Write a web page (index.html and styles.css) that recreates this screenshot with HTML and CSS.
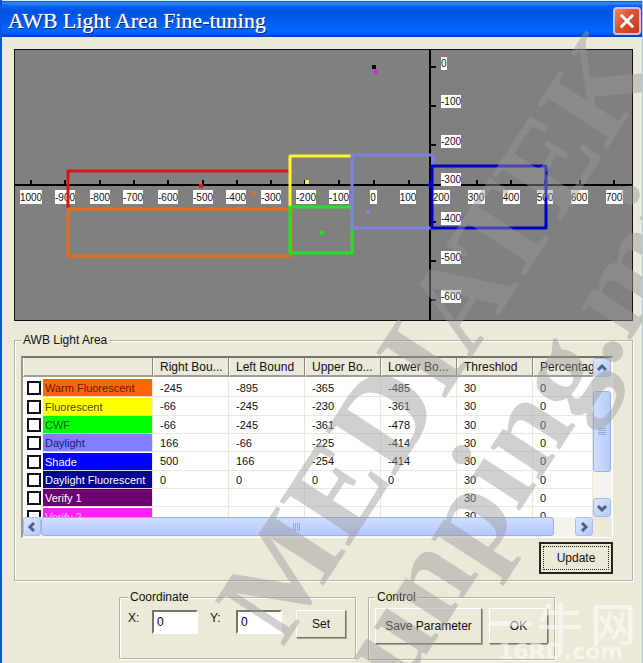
FILE: index.html
```html
<!DOCTYPE html>
<html lang="en">
<head>
<meta charset="utf-8">
<title>AWB Light Area Fine-tuning</title>
<link rel="stylesheet" href="styles.css">
</head>
<body>
<main class="window">
  <header class="titlebar">
    <h1>AWB Light Area Fine-tuning</h1>
    <button class="close" type="button" aria-label="Close">
      <svg viewBox="0 0 21 21"><path d="M4 4 L17 17 M17 4 L4 17"/></svg>
    </button>
  </header>

  <div class="client">
    <svg class="chart" viewBox="14 49 619 272" role="img" aria-label="Light area chart">
      <rect class="plot" x="14.5" y="49.5" width="618" height="271"/>
      <path class="axis" d="M15 185H632M430 50V320"/>
      <path class="axis" d="M31 180v5M65 180v5M100 180v5M134 180v5M168 180v5M203 180v5M237 180v5M271 180v5M305 180v5M339 180v5M374 180v5M409 180v5M477 180v5M511 180v5M545 180v5M580 180v5M614 180v5"/>
      <path class="axis" d="M430 67h6M430 106h6M430 145h6M430 222h6M430 261h6M430 300h6"/>
      <path class="tag" d="M20 190h22v14h-22zM55 190h20v14h-20zM90 190h20v14h-20zM123 190h20v14h-20zM158 190h20v14h-20zM193 190h20v14h-20zM226 190h20v14h-20zM261 190h20v14h-20zM296 190h20v14h-20zM329 190h20v14h-20zM370 190h7v14h-7zM400 190h16v14h-16zM433 190h17v14h-17zM468 190h17v14h-17zM503 190h17v14h-17zM537 190h16v14h-16zM571 190h17v14h-17zM606 190h17v14h-17z"/>
      <path class="tag" d="M441 57h6v13h-6zM441 95h20v13h-20zM441 135h20v13h-20zM441 173h20v13h-20zM441 212h20v13h-20zM441 251h20v13h-20zM441 290h20v13h-20z"/>
      <g class="xlabels">
        <text x="31" y="201">1000</text><text x="65" y="201">-900</text><text x="100" y="201">-800</text><text x="133" y="201">-700</text><text x="168" y="201">-600</text><text x="203" y="201">-500</text><text x="236" y="201">-400</text><text x="271" y="201">-300</text><text x="306" y="201">-200</text><text x="339" y="201">-100</text><text x="373" y="201">0</text><text x="408" y="201">100</text><text x="441" y="201">200</text><text x="476" y="201">300</text><text x="511" y="201">400</text><text x="545" y="201">500</text><text x="579" y="201">600</text><text x="614" y="201">700</text>
      </g>
      <g class="ylabels">
        <text x="441" y="67">0</text><text x="441" y="105">-100</text><text x="441" y="145">-200</text><text x="441" y="183">-300</text><text x="441" y="222">-400</text><text x="441" y="261">-500</text><text x="441" y="300">-600</text>
      </g>
      <g class="areas">
        <path class="red" d="M68 208V171H289"/>
        <rect class="orange" x="68" y="209" width="223" height="47"/>
        <path class="yellow" d="M290 206V156H351"/>
        <rect class="green" x="290" y="207" width="62" height="46"/>
        <path class="lilac" d="M432 228H352V155H433V166"/>
        <rect class="blue" x="432" y="166" width="114" height="62"/>
      </g>
      <path fill="#000" d="M372 65h4v4h-4z"/>
      <path fill="#e020e0" d="M374 70h4v4h-4z"/>
      <path fill="#dc1a1a" d="M199 184h4v4h-4z"/>
      <path fill="#e0702a" d="M252 191h4v4h-4z"/>
      <path fill="#f8f840" d="M305 180h4v4h-4z"/>
      <path fill="#20e020" d="M320 231h4v4h-4z"/>
      <path fill="#8080e0" d="M366 210h4v4h-4z"/>
      <path fill="#0000d0" d="M427 185l3 -3h3v6h-3z"/>
    </svg>

    <fieldset class="group area">
      <legend>AWB Light Area</legend>
      <div class="list">
        <div class="rows">
          <table>
            <colgroup><col class="name"><col class="num"><col class="num"><col class="num"><col class="num"><col class="num"><col></colgroup>
            <thead><tr><th aria-label="Name"></th><th>Right Bou...</th><th>Left Bound</th><th>Upper Bo...</th><th>Lower Bo...</th><th>Threshlod</th><th>Percentag</th></tr></thead>
            <tbody>
              <tr><td><label><input type="checkbox"><span class="c-warm">Warm Fluorescent</span></label></td><td>-245</td><td>-895</td><td>-365</td><td>-485</td><td>30</td><td>0</td></tr>
              <tr><td><label><input type="checkbox"><span class="c-fluo">Fluorescent</span></label></td><td>-66</td><td>-245</td><td>-230</td><td>-361</td><td>30</td><td>0</td></tr>
              <tr><td><label><input type="checkbox"><span class="c-cwf">CWF</span></label></td><td>-66</td><td>-245</td><td>-361</td><td>-478</td><td>30</td><td>0</td></tr>
              <tr><td><label><input type="checkbox"><span class="c-day">Daylight</span></label></td><td>166</td><td>-66</td><td>-225</td><td>-414</td><td>30</td><td>0</td></tr>
              <tr><td><label><input type="checkbox"><span class="c-shade">Shade</span></label></td><td>500</td><td>166</td><td>-254</td><td>-414</td><td>30</td><td>0</td></tr>
              <tr><td><label><input type="checkbox"><span class="c-dayfluo">Daylight Fluorescent</span></label></td><td>0</td><td>0</td><td>0</td><td>0</td><td>30</td><td>0</td></tr>
              <tr><td><label><input type="checkbox"><span class="c-v1">Verify 1</span></label></td><td></td><td></td><td></td><td></td><td>30</td><td>0</td></tr>
              <tr><td><label><input type="checkbox"><span class="c-v2">Verify 2</span></label></td><td></td><td></td><td></td><td></td><td>30</td><td>0</td></tr>
            </tbody>
          </table>
        </div>
        <div class="vbar">
          <button type="button" class="arrow" aria-label="Scroll up"><svg viewBox="0 0 16 16"><path d="M4 10l4-4 4 4"/></svg></button>
          <div class="vtrack"><div class="vthumb"><svg class="grip" viewBox="0 0 8 8"><path d="M0 .5h8M0 2.5h8M0 4.5h8M0 6.5h8"/></svg></div></div>
          <button type="button" class="arrow" aria-label="Scroll down"><svg viewBox="0 0 16 16"><path d="M4 6l4 4 4-4"/></svg></button>
        </div>
        <div class="hbar">
          <button type="button" class="arrow" aria-label="Scroll left"><svg viewBox="0 0 16 16"><path d="M10 4l-4 4 4 4"/></svg></button>
          <div class="htrack"><div class="hthumb"><svg class="grip" viewBox="0 0 8 8"><path d="M.5 0v8M2.5 0v8M4.5 0v8M6.5 0v8"/></svg></div></div>
          <button type="button" class="arrow" aria-label="Scroll right"><svg viewBox="0 0 16 16"><path d="M6 4l4 4-4 4"/></svg></button>
        </div>
      </div>
      <button type="button" class="btn update"><span>Update</span></button>
    </fieldset>

    <div class="bottom">
      <fieldset class="group coordinate">
        <legend>Coordinate</legend>
        <label for="cx">X:</label><input id="cx" type="text" value="0">
        <label for="cy">Y:</label><input id="cy" type="text" value="0">
        <button type="button" class="btn set">Set</button>
      </fieldset>
      <fieldset class="group control">
        <legend>Control</legend>
        <button type="button" class="btn save">Save Parameter</button>
        <button type="button" class="btn ok">OK</button>
      </fieldset>
    </div>
  </div>

  <svg class="watermark" viewBox="0 0 643 663" preserveAspectRatio="xMinYMin meet">
    <g class="stamp">
      <text class="brand" transform="translate(283 648) rotate(-57)">MEDIATEK</text>
      <text class="owner" transform="translate(402 692) rotate(-57)">unping.mi</text>
    </g>
    <g class="site">
      <text class="cn" y="641"><tspan x="488">一</tspan><tspan x="537">牛</tspan><tspan x="590">网</tspan></text>
      <text class="domain" x="498" y="659">16RD.com</text>
    </g>
  </svg>
</main>
</body>
</html>
```
FILE: styles.css
```css
* { box-sizing: border-box; }

body {
  margin: 0;
  background: #ece9d8;
  color: #111;
  font: 11px/14px "Liberation Sans", sans-serif;
}

.window {
  position: relative;
  min-height: 100vh;
  overflow: hidden;
  border-left: 2px solid #0a55e0;
  border-right: 1px solid #b4c8ee;
  background: #ece9d8;
}

.titlebar {
  display: flex;
  align-items: center;
  justify-content: space-between;
  height: 37px;
  margin-left: -2px;
  padding: 3px 1px 0 8px;
  border-top: 1px solid #d8f0f8;
  background: linear-gradient(#0a50c8 0, #3a8cf8 2px, #0a62ea 5px, #0054e0 10px, #0058ea 18px, #0066ff 28px, #0062f8 32px, #003dc0 36px);
}

h1 {
  margin: 0;
  color: #fff;
  font: 22px/26px "Liberation Serif", serif;
  text-shadow: 1px 1px 0 #0a2a80, 0 0 1px #fff;
}

.close {
  width: 28px;
  height: 28px;
  padding: 2px;
  border: 2px solid #c8c0e8;
  border-radius: 4px;
  background: linear-gradient(135deg, #ec8a6a, #dc5030 45%, #c83a18);
}
.close svg { display: block; width: 100%; height: 100%; }
.close path { stroke: #fff; stroke-width: 3; fill: none; }

.client { padding: 12px 9px 4px 12px; }

.chart { display: block; width: 100%; }
.plot { fill: #808080; stroke: #111; }
.axis { stroke: #000; stroke-width: 2; fill: none; }
.tag { fill: #fff; }
.chart text { font-size: 10px; fill: #111; }
.xlabels { text-anchor: middle; }
.areas > * { fill: none; stroke-width: 3; stroke-linejoin: round; }
.red { stroke: #d81414; }
.orange { stroke: #e46c20; }
.yellow { stroke: #fcf830; }
.green { stroke: #20e424; }
.lilac { stroke: #8080e4; }
.blue { stroke: #0000c8; }

.group {
  min-width: 0;
  margin: 0;
  border: 1px solid #b4b2a4;
  box-shadow: 1px 1px 0 #fff, inset 1px 1px 0 #fff;
}
.group legend {
  padding: 0 2px;
  background: #ece9d8;
  font-size: 12px;
}

.area {
  display: block;
  margin-top: 12px;
  padding: 9px 19px 6px 6px;
}

.list {
  display: grid;
  grid-template-columns: 1fr 19px;
  grid-template-rows: 159px 20px;
  border: 1px solid #fff;
  border-top: 2px solid #77756a;
  border-left: 2px solid #9a988c;
  background: #ece9d8;
}
.rows { overflow: hidden; background: #fff; }

table {
  width: 100%;
  border-collapse: separate;
  border-spacing: 0;
  table-layout: fixed;
}
.name { width: 130px; }
.num { width: 76px; }
th {
  height: 19px;
  padding: 0 0 0 6px;
  overflow: hidden;
  border-right: 1px solid #88867a;
  border-bottom: 2px solid #a09e90;
  border-left: 1px solid #fff;
  background: #ece9d8;
  font-size: 12px;
  font-weight: 400;
  text-align: left;
  white-space: nowrap;
}
th:last-child { border-right: 0; }
thead::after { content: ""; display: block; height: 2px; }
td {
  height: 18px;
  padding: 0 0 0 7px;
  border-right: 1px solid #ece9d8;
  border-bottom: 1px solid #ece9d8;
}
tr:nth-child(3n + 2) td { height: 19px; }
td:first-child { height: 18px; padding: 0; border-bottom: 0; }
td label { display: flex; align-items: center; height: 100%; }
td input {
  flex: none;
  width: 14px;
  height: 14px;
  margin: 0 2px 0 4px;
  appearance: none;
  border: 2px solid #111;
  background: #fff;
}
td span {
  flex: 1;
  height: 18px;
  padding-left: 2px;
  border-bottom: 1px solid #dcd8c8;
  line-height: 18px;
  white-space: nowrap;
}
.c-warm { background: #ff6600; color: #5a1c00; }
.c-fluo { background: #ffff00; color: #4a4a00; }
.c-cwf { background: #00ff00; color: #005a00; }
.c-day { background: #8080ff; color: #1c1c60; }
.c-shade { background: #0000ff; color: #fff; }
.c-dayfluo { background: #000090; color: #fff; }
.c-v1 { background: #6c0070; color: #fff; }
.c-v2 { background: #ff20ff; color: #ffc0ff; }

.vbar, .hbar { display: flex; background: #f4f3ee; }
.vbar { flex-direction: column; }
.arrow {
  flex: none;
  width: 18px;
  height: 19px;
  padding: 0;
  border: 1px solid #a8bcf0;
  border-radius: 3px;
  background: linear-gradient(135deg, #dce8ff, #b4c8f8);
}
.arrow svg { display: block; width: 16px; height: 16px; }
.arrow path { fill: none; stroke: #4d6185; stroke-width: 3; }
.vtrack, .htrack { flex: 1; }
.vtrack { padding-top: 14px; }
.vthumb, .hthumb {
  display: flex;
  align-items: center;
  justify-content: center;
  border: 1px solid #98b0e8;
  border-radius: 3px;
  background: #c4d4fc;
}
.vthumb { width: 18px; height: 81px; background: linear-gradient(90deg, #d0deff, #b8ccf8); }
.hthumb { width: 96%; height: 19px; background: linear-gradient(#d0deff, #b4c8fc); }
.grip { width: 8px; height: 8px; }
.grip path { stroke: #8ca8e8; }

.btn {
  padding: 0;
  border: 1px solid;
  border-color: #fff #77756a #77756a #fff;
  box-shadow: 1px 1px 0 #a8a698;
  background: #ece9d8;
  color: #111;
  font: 12px/14px "Liberation Sans", sans-serif;
}
.update {
  display: block;
  width: 74px;
  height: 32px;
  margin: 4px 0 0 auto;
  padding: 2px;
  border: 2px solid #222;
  box-shadow: none;
}
.update span {
  display: block;
  height: 100%;
  border: 1px dotted #222;
  line-height: 22px;
}

.bottom {
  display: flex;
  align-items: flex-start;
  justify-content: center;
  gap: 12px;
  margin-top: 9px;
  padding-left: 27px;
}
.bottom .group {
  display: flex;
  align-items: flex-start;
}
.coordinate { width: 237px; height: 69px; padding: 6px 8px 0; }
.coordinate label { width: 24px; font-size: 12px; line-height: 16px; }
.coordinate input {
  width: 46px;
  height: 24px;
  padding: 0 3px;
  border: 2px solid;
  border-color: #77756a #fff #fff #77756a;
  border-radius: 0;
  background: #fff;
  font: 12px/16px "Liberation Sans", sans-serif;
}
.coordinate label + input + label { width: 26px; margin-left: 12px; }
.set { width: 50px; height: 28px; margin-left: 14px; }
.control { width: 187px; height: 70px; gap: 7px; padding: 4px 6px 0; }
.save { width: 107px; height: 36px; }
.ok { width: 59px; height: 36px; }

.watermark {
  position: absolute;
  top: 0;
  left: -2px;
  width: calc(100% + 3px);
  pointer-events: none;
}
.stamp { fill: #9a9a9c; opacity: 0.46; font-family: "Liberation Serif", serif; font-weight: 700; }
.brand { font-size: 126px; }
.owner { font-size: 128px; }
.site { fill: #fff; opacity: 0.55; }
.cn { font: 500 46px "Noto Sans CJK SC", sans-serif; }
.domain { font: 700 22px "DejaVu Sans", sans-serif; }
```
